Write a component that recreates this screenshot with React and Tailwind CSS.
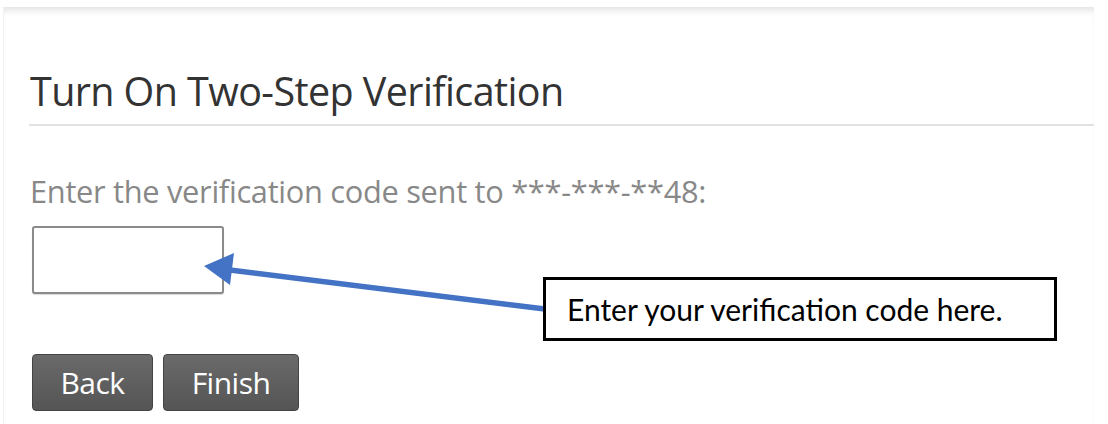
export default function App() {
  return (
    <div className="relative w-[1108px] h-[424px] bg-white overflow-hidden" style={{ fontFamily: '"Open Sans", sans-serif' }}>
      <div className="ml-[3px] mt-[7px] w-[1091px] h-[417px] border-l border-[#f2f2f2] shadow-[inset_0_7px_7px_-4px_rgba(0,0,0,0.12)]">
        <div className="pt-[59px] pl-[25px]">
          <h1 className="text-[39.5px] leading-[50px] text-[#333] tracking-[-0.6px] pl-[1px]">Turn On Two-Step Verification</h1>
          <div className="mt-[8px] h-[2px] bg-[#e2e2e2]"></div>
          <p className="mt-[45px] pl-[1px] text-[30.8px] leading-[40px] text-[#888] tracking-[-0.3px]">Enter the verification code sent to ***-***-**48:</p>
          <div className="mt-[15px] ml-[3px] w-[192px] h-[68px] border-2 border-[#8a8a8a] rounded-[3px] bg-white shadow-[0_1px_1px_rgba(0,0,0,0.15)]"></div>
          <div className="mt-[60px] ml-[3px] flex gap-[10px]">
            <button className="w-[121px] h-[57px] rounded-[4px] bg-gradient-to-b from-[#6a6a6a] to-[#555] border border-[#444] text-white text-[30px] leading-[40px] tracking-[-0.5px]">Back</button>
            <button className="w-[136px] h-[57px] rounded-[4px] bg-gradient-to-b from-[#6a6a6a] to-[#555] border border-[#444] text-white text-[30px] leading-[40px] tracking-[-0.5px]">Finish</button>
          </div>
        </div>
      </div>
      <svg className="absolute left-0 top-0" width="1108" height="424">
        <line x1="545" y1="309" x2="230" y2="270" stroke="#4472C4" strokeWidth="5.5" />
        <polygon points="204,266 234,253 230,285" fill="#4472C4" />
      </svg>
      <div className="absolute left-[543px] top-[277px] w-[514px] h-[64px] border-[3px] border-black bg-white flex items-center pl-[21px]">
        <span className="text-[30px] leading-[36px] text-black" style={{ fontFamily: 'Lato, "Noto Sans", sans-serif' }}>Enter your verification code here.</span>
      </div>
    </div>
  );
}
